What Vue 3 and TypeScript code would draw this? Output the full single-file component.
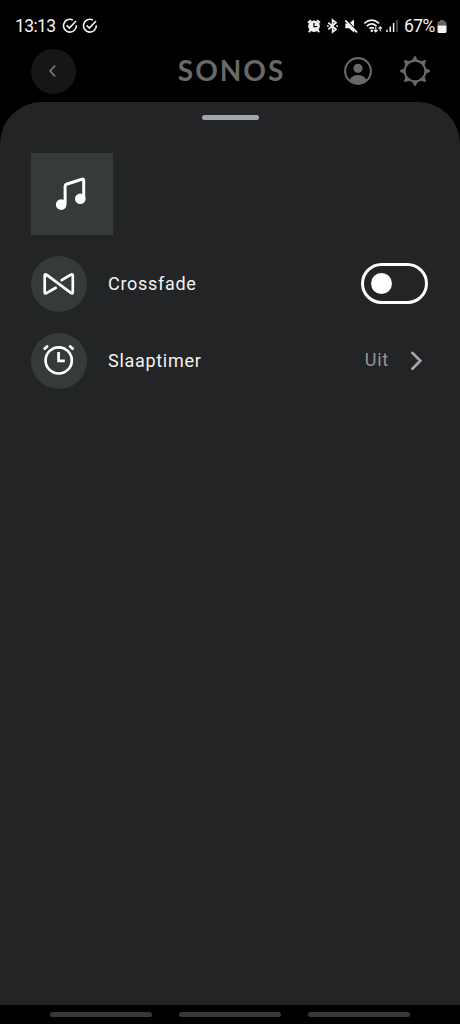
<script setup lang="ts">
import { ref } from 'vue'

const crossfade = ref(false)
const sleepTimer = ref('Uit')
const navPills: string[] = ['recents', 'home', 'back']
const notifications: number[] = [1, 2]
</script>

<template>
  <div class="screen">
    <div class="status">
      <span class="time">13:13</span>
      <svg v-for="n in notifications" :key="n" class="check" width="16" height="16" viewBox="0 0 16 16">
        <path d="M10.8 2A6.4 6.4 0 1 0 14.3 7.2" />
        <path d="M4.6 7.3L7.4 10L14 3" />
      </svg>
      <svg class="tray" width="96" height="18" viewBox="304 17 96 18">
        <!-- alarm -->
        <g>
          <circle cx="314" cy="26.2" r="5.8" fill="#f2f2f2" />
          <path d="M308 22.8L311 20.1M320 22.8L317 20.1M310.2 30L309 32.2M317.8 30L319 32.2" class="w" stroke-width="1.9" />
          <path d="M314 23V26.7H317.2" class="k" stroke-width="1.3" />
        </g>
        <!-- bluetooth -->
        <path d="M328.3 22.6L336 29.3L332.6 32V20L336 22.7L328.3 29.4M327 26H328.8M336.3 26H338" class="w" stroke-width="1.7" />
        <!-- muted -->
        <path d="M345.3 23.5H349L354 19.5V32.5L349 28.3H345.3Z" fill="#f2f2f2" />
        <path d="M345.4 19L357.4 31.2" class="k" stroke-width="1.4" />
        <path d="M345.2 20.4L357 32.3" class="w" stroke-width="1.8" />
        <!-- wifi -->
        <path d="M364.3 23.4Q371.7 16.9 379.1 23.4M366.9 26.1Q371.7 21.8 376.5 26.1M369.3 28.6Q371.7 26.7 374 28.6" class="w" stroke-width="1.7" />
        <circle cx="371.8" cy="30.7" r="1.3" fill="#f2f2f2" />
        <path d="M375.8 26.8V31.7M374 30L375.8 31.9L377.6 30M380.2 31.2V27M378.5 28.7L380.2 26.8L382 28.7" class="w" stroke-width="1.1" />
        <!-- signal -->
        <path d="M387 29.7V32M390.3 26.5V32M393.6 23V32" class="w" stroke-width="1.5" />
        <path d="M397 20V32" stroke="#555" stroke-width="1.6" />
      </svg>
      <span class="percent">67%</span>
      <svg class="battery" width="10" height="14" viewBox="0 0 10 14">
        <path d="M3 0H7V1.2H8Q9.5 1.2 9.5 2.7V5.8H.5V2.7Q.5 1.2 2 1.2H3Z" fill="#626262" />
        <path d="M.5 5.5H9.5V11.5Q9.5 13 8 13H2Q.5 13 .5 11.5Z" fill="#f4f4f4" />
      </svg>
    </div>

    <header class="header">
      <button class="back" aria-label="Terug">
        <svg width="10" height="14" viewBox="0 0 10 14"><path d="M7.1 1.7L2.1 7L7.1 12.3" /></svg>
      </button>
      <span class="brand">SONOS</span>
      <svg class="account" width="30" height="30" viewBox="0 0 30 30">
        <defs><clipPath id="disc"><circle cx="15" cy="15" r="13" /></clipPath></defs>
        <circle cx="15" cy="15" r="12.9" fill="none" stroke="#696969" stroke-width="2.1" />
        <circle cx="15" cy="12.3" r="4.6" fill="#696969" />
        <ellipse cx="15" cy="26.2" rx="8.8" ry="7.3" fill="#696969" clip-path="url(#disc)" />
      </svg>
      <svg class="gear" width="32" height="32" viewBox="0 0 32 32">
        <circle cx="16" cy="16" r="10.4" fill="none" stroke="#696969" stroke-width="2.1" />
        <path
          v-for="i in 8"
          :key="i"
          d="M13 6L15.1 1.5Q16 .3 16.9 1.5L19 6Z"
          :transform="`rotate(${i * 45} 16 16)`"
          fill="#696969"
        />
      </svg>
    </header>

    <main class="sheet">
      <div class="handle"></div>
      <div class="art">
        <svg width="34" height="38" viewBox="0 0 34 38">
          <path d="M10.1 29V11.2Q10.1 9.7 11.4 9.2L26.9 4.2Q28.7 3.7 28.7 5.5V24" fill="none" stroke="#fff" stroke-width="3" />
          <circle cx="6.2" cy="29.6" r="5.3" fill="#fff" />
          <circle cx="25.3" cy="23.8" r="5.3" fill="#fff" />
        </svg>
      </div>

      <div class="row">
        <span class="bubble">
          <svg width="36" height="36" viewBox="0 0 36 36">
            <path d="M14.8 21.8L5.4 27.1Q3.7 28 3.7 26V9.6Q3.7 7.6 5.4 8.6L29.9 26.9Q31.8 28 31.8 26V9.6Q31.8 7.6 29.9 8.6L20.7 14.2" class="line" />
          </svg>
        </span>
        <span class="label">Crossfade</span>
        <button class="toggle" :class="{ on: crossfade }" role="switch" :aria-checked="crossfade" @click="crossfade = !crossfade">
          <span class="knob"></span>
        </button>
      </div>

      <div class="row">
        <span class="bubble">
          <svg width="36" height="36" viewBox="0 0 36 36">
            <circle cx="17.7" cy="17.4" r="13.1" class="line" />
            <path d="M17.6 8.9V17.9H23.8" class="line sharp" />
            <path d="M3.7 5.6L6.1 3.5M31.6 5.6L29.2 3.5" class="line ears" />
          </svg>
        </span>
        <span class="label">Slaaptimer</span>
        <span class="value">{{ sleepTimer }}</span>
        <svg class="chevron" width="14" height="20" viewBox="0 0 14 20"><path d="M2.4 1.9L10.3 9.8L2.4 17.7" /></svg>
      </div>
    </main>

    <nav class="navbar">
      <span v-for="pill in navPills" :key="pill" class="pill"></span>
    </nav>
  </div>
</template>

<style>
html,
body {
  background: #000;
}
</style>

<style scoped>
.screen {
  width: 460px;
  height: 1024px;
  display: flex;
  flex-direction: column;
  background: #000;
  color: #fff;
  font-family: Roboto, "Liberation Sans", sans-serif;
  overflow: hidden;
}
.screen * {
  box-sizing: border-box;
}
svg {
  display: block;
  flex: none;
}
button {
  border: 0;
  padding: 0;
}
.status {
  display: flex;
  align-items: center;
  height: 40px;
  padding: 12px 13px 0 15px;
  color: #f2f2f2;
  font-size: 17.5px;
  line-height: 26px;
}
.time {
  width: 47px;
  letter-spacing: -0.6px;
}
.check {
  margin-right: 4px;
}
.check path {
  fill: none;
  stroke: #f2f2f2;
  stroke-width: 1.6;
}
.tray {
  margin-left: auto;
}
.w,
.k {
  fill: none;
  stroke: #f2f2f2;
}
.k {
  stroke: #000;
}
.percent {
  width: 33px;
  margin-left: 4px;
  letter-spacing: -0.6px;
}
.battery {
  margin-top: 1px;
}
.header {
  display: flex;
  align-items: center;
  height: 62px;
  padding: 0 29px 0 31px;
}
.back {
  width: 45px;
  height: 45px;
  border-radius: 50%;
  background: #151717;
  display: grid;
  place-items: center;
}
.back path {
  fill: none;
  stroke: #777;
  stroke-width: 1.7;
}
.brand {
  margin: 0 0 2px 102px;
  width: 166px;
  color: #696969;
  font-family: Lato, sans-serif;
  font-weight: 700;
  font-size: 28px;
  line-height: 32px;
  letter-spacing: 2px;
}
.gear {
  margin-left: 26px;
}
.sheet {
  height: 903px;
  background: #222426;
  border-radius: 42px 42px 0 0;
  padding: 13px 32px 0 31px;
}
.handle {
  width: 57px;
  height: 5px;
  margin: 0 0 33px 171px;
  border-radius: 3px;
  background: #a3a5ad;
}
.art {
  width: 82px;
  height: 82px;
  margin-bottom: 21px;
  background: #363a3b;
  display: grid;
  place-items: center;
}
.row {
  display: flex;
  align-items: center;
  height: 56px;
  margin-bottom: 21px;
}
.bubble {
  width: 56px;
  height: 56px;
  border-radius: 50%;
  background: #363a3b;
  display: grid;
  place-items: center;
}
.line {
  fill: none;
  stroke: #fff;
  stroke-width: 2.7;
  stroke-linecap: round;
  stroke-linejoin: round;
}
.sharp {
  stroke-linecap: butt;
  stroke-linejoin: miter;
}
.ears {
  stroke-width: 2.8;
}
.label {
  flex: 1;
  margin: 0 0 2px 21px;
  color: #f3f3f3;
  font-size: 18px;
  letter-spacing: 0.7px;
}
.toggle {
  width: 67px;
  height: 41px;
  margin-bottom: 1px;
  border: 3px solid #fff;
  border-radius: 21px;
  background: transparent;
  display: flex;
  align-items: center;
  padding: 0 7px;
}
.toggle.on {
  justify-content: flex-end;
}
.knob {
  width: 21px;
  height: 21px;
  border-radius: 50%;
  background: #fff;
}
.value {
  margin: 0 21px 3px 0;
  color: #95979a;
  font-size: 18px;
  letter-spacing: 0.8px;
}
.chevron {
  margin-right: 4px;
}
.chevron path {
  fill: none;
  stroke: #a5a7ab;
  stroke-width: 2.7;
  stroke-linecap: round;
}
.navbar {
  height: 19px;
  display: flex;
  justify-content: center;
  align-items: center;
  gap: 27px;
  background: #000;
}
.pill {
  width: 102px;
  height: 5px;
  border-radius: 3px;
  background: #373737;
}
</style>
